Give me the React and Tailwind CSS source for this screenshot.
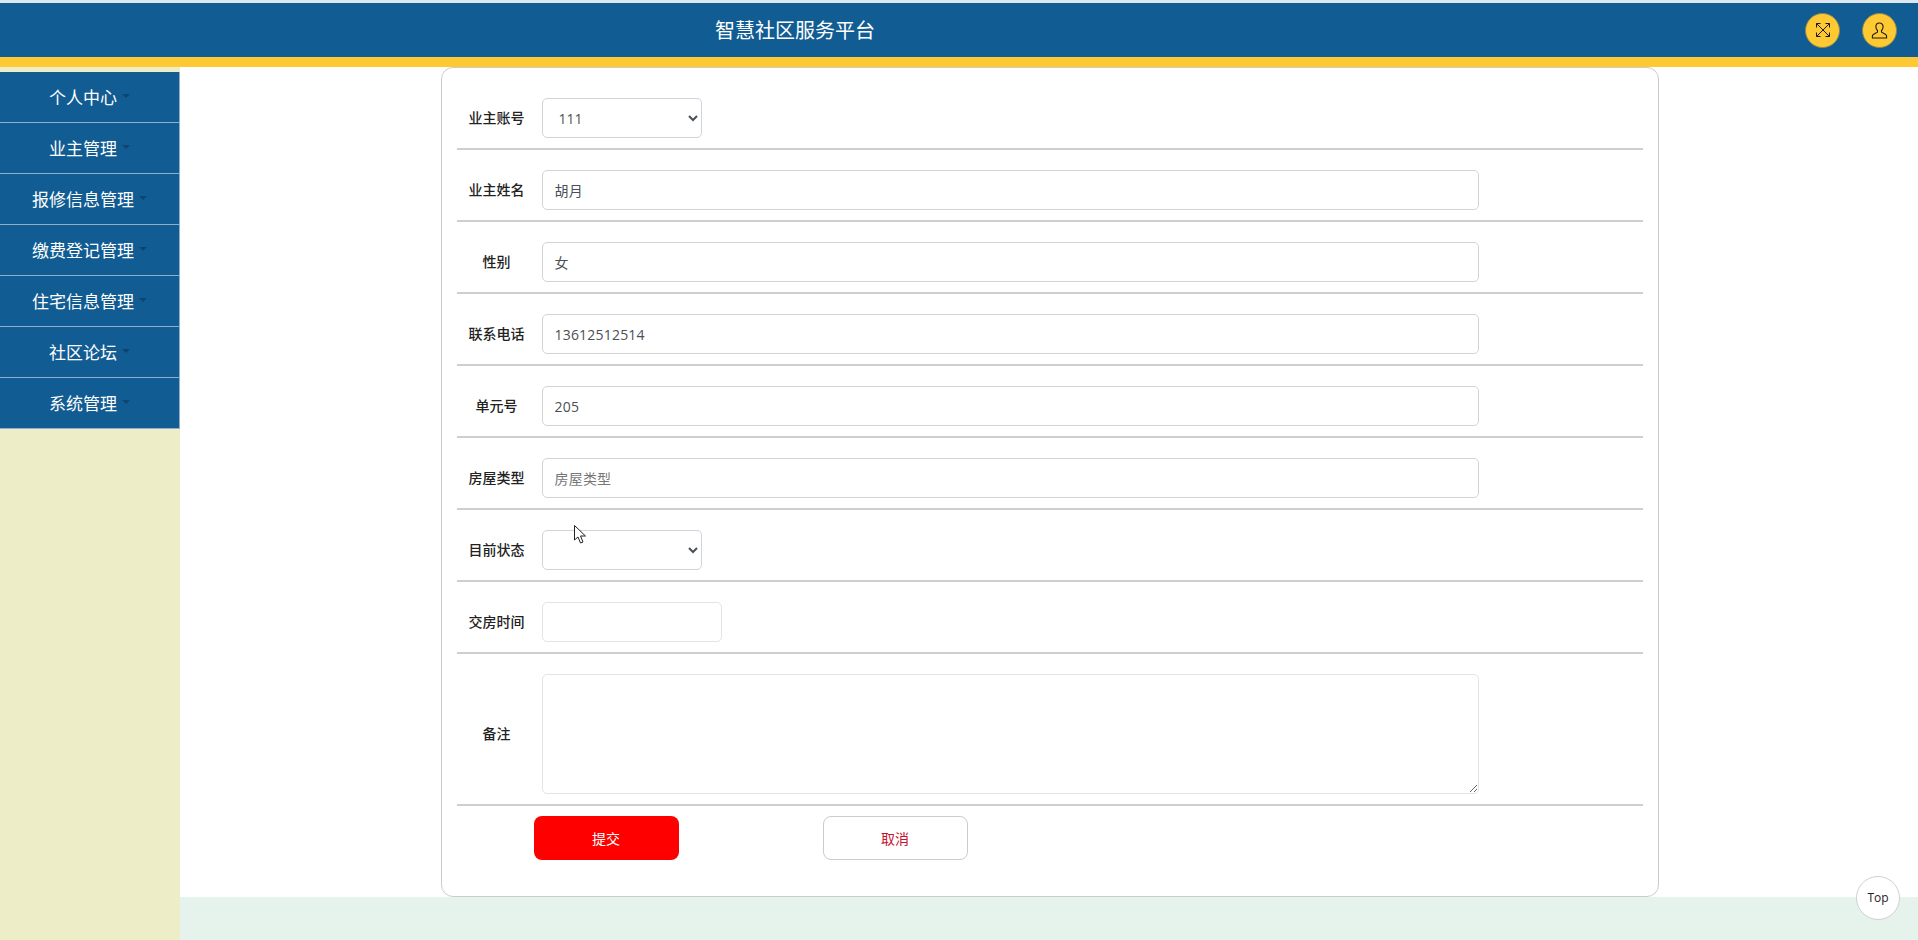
import React from "react";

const menu = ["个人中心", "业主管理", "报修信息管理", "缴费登记管理", "住宅信息管理", "社区论坛", "系统管理"];

function Row({ label, children, hClass = "h-[72px]" }) {
  return (
    <div className={`flex items-center border-b-2 border-[#cfcfcf] pt-[10px] ${hClass}`}>
      <div className="w-[85px] shrink-0 pr-[5px] pb-[1px] text-center text-[14px] font-medium text-[#222]">{label}</div>
      {children}
    </div>
  );
}

const fieldFont = "font-['Open_Sans','Noto_Sans_CJK_SC',sans-serif]";
const inputCls = `block h-[40px] w-[937px] rounded-[5px] border border-[#ced4da] bg-white px-[12px] text-[14px] tracking-[0.2px] text-[#495057] outline-none placeholder:text-[#777] ${fieldFont}`;

export default function App() {
  return (
    <div className="flex h-[940px] w-[1918px] flex-col overflow-hidden bg-white font-['Noto_Sans_CJK_SC','Noto_Sans',sans-serif]">
      <div className="h-[3px] bg-[#dfe7ee]" />
      <header className="flex h-[54px] shrink-0 items-center bg-[#115c93]">
        <div className="w-[1590px] text-center text-[20px] font-normal text-white">智慧社区服务平台</div>
        <div className="ml-[215px] flex items-center gap-[22px]">
          <button className="flex h-[35px] w-[35px] items-center justify-center rounded-full border border-[#8f8a4a] bg-[#ffc933]">
            <svg width="16" height="16" viewBox="0 0 16 16" fill="none" stroke="#1a1a1a" strokeWidth="1">
              <path d="M1.5 1.5 14.5 14.5M14.500 1.5 1.5 14.5M1.5 5.500v-4h4M10.500 1.5h4v4M14.500 10.500v4h-4M5.500 14.500h-4v-4" />
            </svg>
          </button>
          <button className="flex h-[35px] w-[35px] items-center justify-center rounded-full border border-[#8f8a4a] bg-[#ffc933]">
            <svg width="17" height="17" viewBox="0 0 17 17" fill="none" stroke="#1a1a1a" strokeWidth="1.1">
              <path d="M8.500 1c-2.200 0-3.600 1.600-3.600 3.700 0 1.700.7 3 1.600 3.800v1.400c0 .8-4.500 1.600-5 3.600-.2.9-.1 2.500-.1 2.500h14.200s.1-1.600-.1-2.500c-.5-2-5-2.800-5-3.600V8.500c.9-.8 1.600-2.100 1.600-3.800C12.100 2.600 10.700 1 8.500 1z" />
            </svg>
          </button>
        </div>
      </header>
      <div className="h-[10px] shrink-0 bg-[#ffc933]" />
      <div className="flex min-h-0 flex-1">
        <aside className="w-[180px] shrink-0 bg-[#edeec8] pt-[5px]">
          {menu.map((m) => (
            <div
              key={m}
              className="flex h-[51px] items-center justify-center border-r border-b border-[#8fb0cb] bg-[#115c93] text-[17px] text-white"
            >
              <span>{m}</span>
              <span className="relative -top-[1px] ml-[5px] h-0 w-0 border-x-[4px] border-t-[4px] border-x-transparent border-t-[#0e4570]" />
            </div>
          ))}
        </aside>
        <main className="flex min-w-0 flex-1 flex-col">
          <div className="flex h-[830px] shrink-0 justify-center bg-white pl-[1px]">
            <div className="h-[830px] w-[1218px] rounded-[12px] border border-[#cccccc] px-[15px] pt-[10px]">
              <Row label="业主账号">
                <select defaultValue="111" className={`h-[40px] w-[160px] rounded-[5px] border border-[#ced4da] bg-white pl-[12px] text-[14px] text-[#495057] outline-none ${fieldFont}`}>
                  <option>111</option>
                </select>
              </Row>
              <Row label="业主姓名"><input className={inputCls} defaultValue="胡月" /></Row>
              <Row label="性别"><input className={inputCls} defaultValue="女" /></Row>
              <Row label="联系电话"><input className={inputCls} defaultValue="13612512514" /></Row>
              <Row label="单元号"><input className={inputCls} defaultValue="205" /></Row>
              <Row label="房屋类型"><input className={inputCls} placeholder="房屋类型" /></Row>
              <Row label="目前状态">
                <select className={`h-[40px] w-[160px] rounded-[5px] border border-[#ced4da] bg-white pl-[12px] text-[14px] text-[#495057] outline-none ${fieldFont}`}>
                  <option></option>
                </select>
              </Row>
              <Row label="交房时间">
                <input className="block h-[40px] w-[180px] rounded-[5px] border border-[#e2e5e8] bg-white px-[11px] text-[14px] outline-none" />
              </Row>
              <Row label="备注" hClass="h-[152px]">
                <textarea className="block h-[120px] w-[937px] resize-y rounded-[5px] border border-[#e2e5e8] bg-white px-[11px] py-[6px] text-[14px] outline-none" />
              </Row>
              <div className="flex pt-[10px] pl-[77px]">
                <button className="h-[44px] w-[145px] rounded-[8px] bg-[#ff0000] text-[14px] text-white">提交</button>
                <button className="ml-[144px] h-[44px] w-[145px] rounded-[8px] border border-[#cccccc] bg-white text-[14px] text-[#c4122f]">取消</button>
              </div>
            </div>
          </div>
          <div className="flex-1 bg-[#e6f2ec]" />
        </main>
      </div>
      <button className="absolute top-[876px] left-[1856px] flex h-[44px] w-[44px] items-center justify-center rounded-full border border-[#d0d0d0] bg-white font-['Open_Sans',sans-serif] text-[12px] text-[#222]">
        Top
      </button>
      <svg className="absolute top-[525px] left-[574px]" width="13" height="20" viewBox="0 0 13 20" fill="#fff" stroke="#222" strokeWidth="1">
        <path d="M.5.500v14.500l3.500-3 2.500 6 2.500-1-2.500-6h5z" />
      </svg>
    </div>
  );
}
